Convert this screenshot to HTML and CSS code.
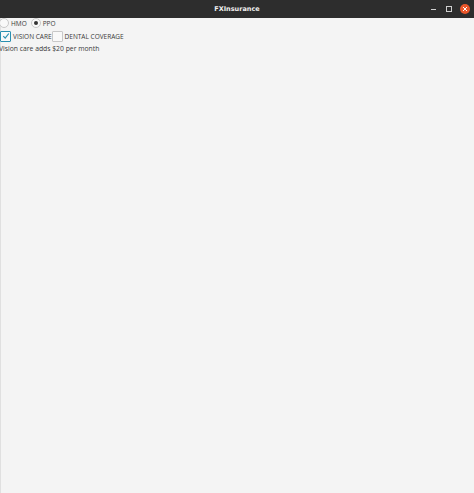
FILE: index.html
```html
<!DOCTYPE html>
<html>
<head>
<meta charset="utf-8">
<link rel="stylesheet" href="styles.css">
</head>
<body>
<div class="window">
  <div class="titlebar">
    <span class="title">FXInsurance</span>
    <div class="controls">
      <span class="ctl min"></span>
      <span class="ctl max"></span>
      <span class="ctl close">
        <svg width="6" height="6" viewBox="0 0 6 6"><path d="M1 1L5 5M5 1L1 5" stroke="#fff" stroke-width="1"/></svg>
      </span>
    </div>
  </div>
  <div class="content">
    <div class="row radios">
      <label class="opt"><span class="radio"></span><span class="lbl">HMO</span></label>
      <label class="opt"><span class="radio on"></span><span class="lbl">PPO</span></label>
    </div>
    <div class="row checks">
      <label class="opt"><span class="check on"><svg width="8" height="8" viewBox="0 0 8 8"><path d="M1.3 4.2L3.2 6.2L6.8 1.5" fill="none" stroke="#2a8fb0" stroke-width="1.2"/></svg></span><span class="lbl">VISION CARE</span></label>
      <label class="opt"><span class="check"></span><span class="lbl">DENTAL COVERAGE</span></label>
    </div>
    <div class="row note">Vision care adds $20 per month</div>
  </div>
</div>
</body>
</html>
```
FILE: styles.css
```css
html, body {
  margin: 0;
  padding: 0;
  width: 474px;
  height: 493px;
  overflow: hidden;
  background: #f4f4f4;
}
.window {
  display: flex;
  flex-direction: column;
  width: 474px;
  height: 493px;
  font-family: "Open Sans", "Liberation Sans", sans-serif;
}
.titlebar {
  height: 18px;
  flex: none;
  background: #2d2d2d;
  display: flex;
  align-items: center;
  justify-content: center;
  position: relative;
}
.title {
  color: #f0f0f0;
  font-family: "DejaVu Sans", sans-serif;
  font-weight: bold;
  font-size: 6.5px;
}
.controls {
  position: absolute;
  right: 4px;
  top: 0;
  height: 18px;
  display: flex;
  align-items: center;
  gap: 6px;
}
.ctl {
  width: 10px;
  height: 10px;
  display: flex;
  align-items: center;
  justify-content: center;
}
.min::before {
  content: "";
  width: 5px;
  height: 1px;
  background: #cfcfcf;
}
.max::before {
  content: "";
  width: 4px;
  height: 4px;
  border: 1px solid #cfcfcf;
}
.close {
  border-radius: 50%;
  background: #e9562a;
}
.content {
  flex: 1;
  background: #f4f4f4;
  display: flex;
  flex-direction: column;
  border-left: 1px solid #e0e0e0;
}
.row {
  display: flex;
  align-items: center;
  font-size: 6.5px;
  color: #3a3a3a;
}
.radios {
  height: 10px;
  gap: 4px;
  margin-left: -2px;
}
.checks {
  height: 12px;
  margin-top: 2px;
  margin-left: -1px;
}
.note {
  margin-top: 2px;
  height: 9px;
  margin-left: -2px;
  font-size: 6.8px;
}
.opt {
  display: flex;
  align-items: center;
}
.radio {
  width: 8px;
  height: 8px;
  border-radius: 50%;
  border: 1px solid #c8c8c8;
  background: #f9f9f9;
  display: flex;
  align-items: center;
  justify-content: center;
  margin-right: 2px;
}
.radio.on::before {
  content: "";
  width: 4px;
  height: 4px;
  border-radius: 50%;
  background: #333;
}
.check {
  width: 9px;
  height: 9px;
  border: 1px solid #c8c8c8;
  border-radius: 1px;
  background: #f9f9f9;
  display: flex;
  align-items: center;
  justify-content: center;
  margin-right: 2px;
}
.check.on {
  border-color: #2a8fb0;
}
.lbl {
  white-space: nowrap;
}
```
